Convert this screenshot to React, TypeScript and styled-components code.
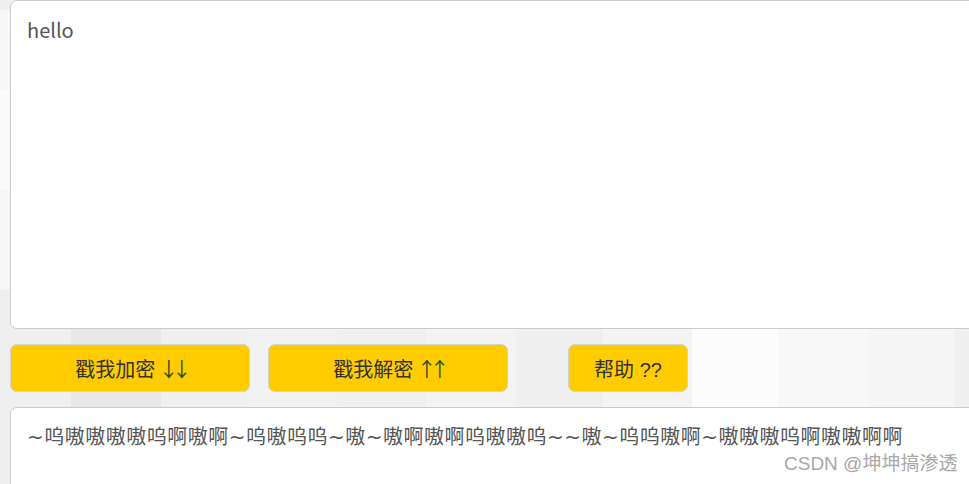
import React from "react";
import styled, { createGlobalStyle } from "styled-components";

const tile = (c: string, x: number, w: number, y = 0, h = "100%") =>
  `linear-gradient(${c}, ${c}) ${x}px ${y}px / ${w}px ${h} no-repeat`;

const GlobalStyle = createGlobalStyle`
  html, body {
    margin: 0;
    padding: 0;
    overflow: hidden;
  }
  body {
    width: 969px;
    height: 484px;
    background:
      ${tile("#f7f7f7", 0, 10, 10, "80px")},
      ${tile("#fafafa", 0, 10, 90, "100px")},
      ${tile("#f6f6f6", 0, 10, 190, "100px")},
      ${tile("#e8e8e8", 71, 90)},
      ${tile("#efefef", 161, 86)},
      ${tile("#f2f2f2", 247, 90)},
      ${tile("#f0f0f0", 337, 89)},
      ${tile("#f3f3f3", 426, 90)},
      ${tile("#efefef", 516, 87)},
      ${tile("#f4f4f4", 603, 89)},
      ${tile("#fcfcfc", 692, 87)},
      ${tile("#f8f8f8", 779, 89)},
      ${tile("#f5f5f5", 868, 87)},
      #efefef;
    font-family: "Noto Sans CJK SC", "Noto Sans", sans-serif;
  }
`;

const Page = styled.div`
  position: relative;
  display: flex;
  flex-direction: column;
  padding-left: 10px;
  width: 1010px;
  height: 484px;
  box-sizing: border-box;
  overflow: hidden;
`;

const TextBox = styled.textarea<{ $h: number; $mt?: number; $wide?: boolean }>`
  display: block;
  box-sizing: border-box;
  width: 1000px;
  height: ${(p) => p.$h}px;
  margin: ${(p) => p.$mt ?? 0}px 0 0 0;
  padding: 15px 16px 12px;
  border: 1px solid #cccccc;
  border-radius: 7px;
  background: #ffffff;
  color: #555555;
  font-family: ${(p) =>
    p.$wide
      ? `"DejaVu Sans", "Noto Sans CJK SC", sans-serif`
      : `"Noto Sans CJK SC", "Noto Sans", sans-serif`};
  font-size: 20px;
  letter-spacing: ${(p) => (p.$wide ? "0.5px" : "0")};
  line-height: 28px;
  resize: none;
  outline: none;
  overflow: hidden;
  white-space: pre;
  flex-shrink: 0;
`;

const ButtonRow = styled.div`
  display: flex;
  align-items: center;
  margin-top: 15px;
  height: 48px;
  flex-shrink: 0;
`;

const Button = styled.button<{ $w: number; $ml: number }>`
  box-sizing: border-box;
  width: ${(p) => p.$w}px;
  height: 48px;
  margin-left: ${(p) => p.$ml}px;
  background: #ffcc00;
  border: 1px solid #d2d2d2;
  border-radius: 7px;
  color: #333333;
  font-family: "Liberation Sans", "Noto Sans CJK SC", sans-serif;
  font-size: 20px;
  padding: 0;
  white-space: nowrap;
  cursor: pointer;
`;

const Arrows = styled.span`
  font-family: "Noto Sans CJK SC", sans-serif;
  letter-spacing: -7px;
  margin-left: -2px;
  color: #2f4a2f;
`;

const Watermark = styled.div`
  position: absolute;
  left: 784px;
  top: 451px;
  color: #a8a8a8;
  font-family: "Liberation Sans", "Noto Sans CJK SC", sans-serif;
  font-size: 19px;
  line-height: 26px;
  white-space: nowrap;
`;

const topText = "hello";
const bottomText =
  "~呜嗷嗷嗷嗷呜啊嗷啊~呜嗷呜呜~嗷~嗷啊嗷啊呜嗷嗷呜~~嗷~呜呜嗷啊~嗷嗷嗷呜啊嗷嗷啊啊";

export default function App() {
  return (
    <>
      <GlobalStyle />
      <Page>
        <TextBox $h={329} readOnly value={topText} />
        <ButtonRow>
          <Button $w={240} $ml={0}>
            戳我加密 <Arrows>↓↓</Arrows>
          </Button>
          <Button $w={240} $ml={18}>
            戳我解密 <Arrows>↑↑</Arrows>
          </Button>
          <Button $w={120} $ml={60}>帮助 ??</Button>
        </ButtonRow>
        <TextBox $h={120} $mt={15} $wide readOnly value={bottomText} />
        <Watermark>CSDN @坤坤搞渗透</Watermark>
      </Page>
    </>
  );
}
